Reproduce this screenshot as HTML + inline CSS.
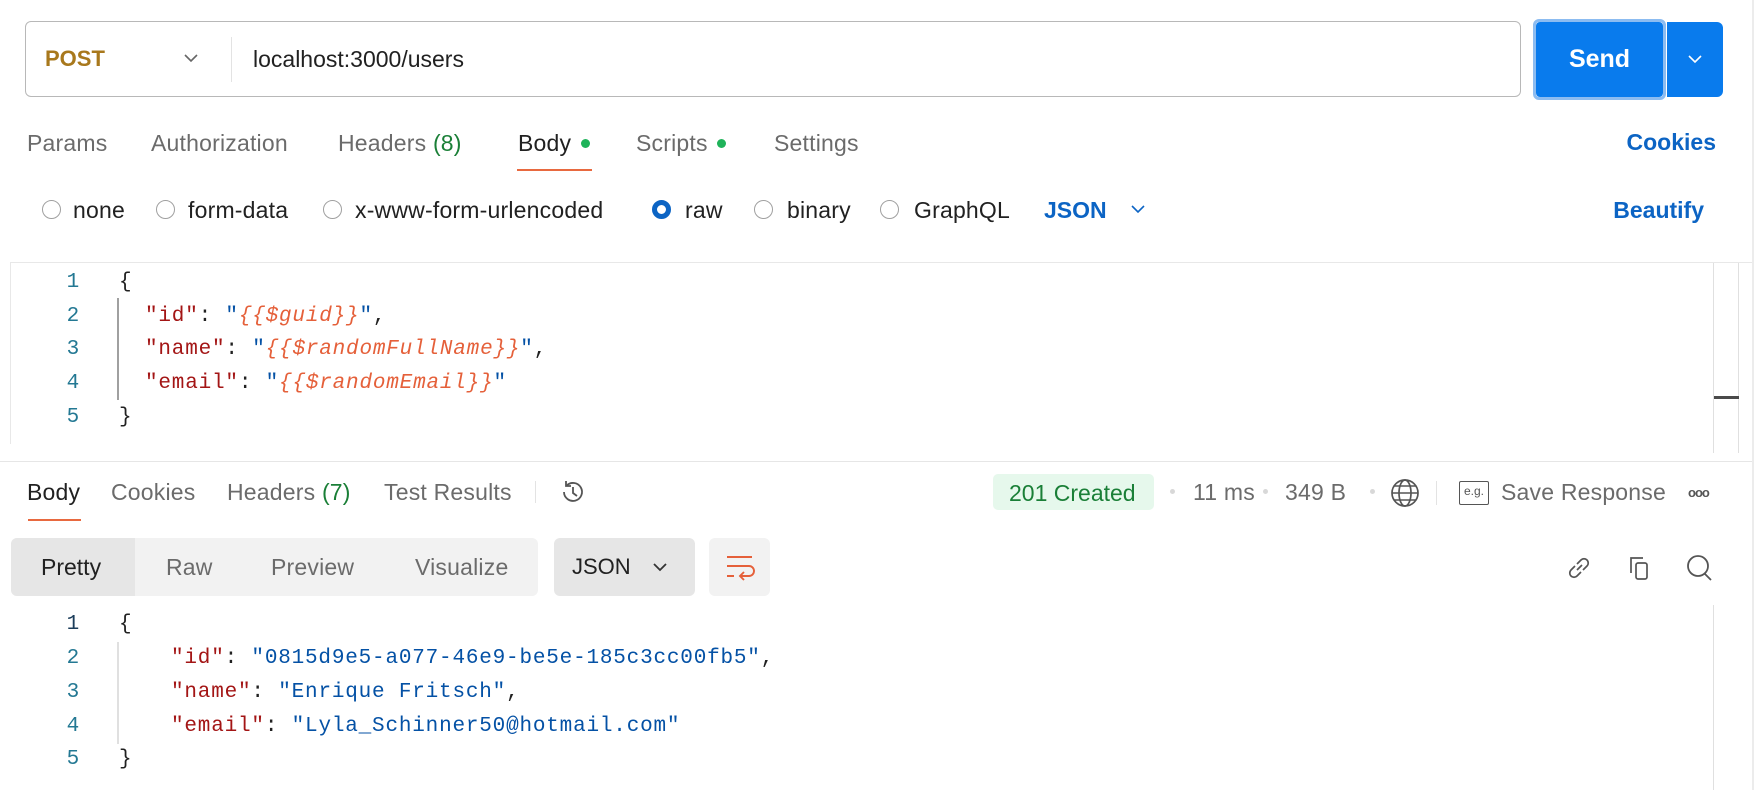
<!DOCTYPE html>
<html><head><meta charset="utf-8"><style>
*{margin:0;padding:0;box-sizing:border-box}
body{width:1754px;height:790px;background:#fff;position:relative;overflow:hidden;font-family:"Liberation Sans",sans-serif;color:#212121}
.a{position:absolute;white-space:nowrap}
.t{font-size:23px;color:#6b6b6b;line-height:26px;letter-spacing:.2px}
.code{font-family:"Liberation Mono",monospace;font-size:21px;letter-spacing:.8px;line-height:24px}
.ln{color:#237893;width:30px;text-align:right}
.k{color:#a31515}.v{color:#0451a5}.var{color:#e5603a;font-style:italic}
.radio{width:19px;height:19px;border:1.5px solid #a0a0a0;border-radius:50%;position:absolute;top:200px}
.dot{width:5px;height:5px;border-radius:50%;background:#d8d8d8;position:absolute;top:489px}
</style></head><body>
<div class="a" style="left:25px;top:21px;width:1496px;height:76px;border:1.5px solid #b8b8b8;border-radius:6px"></div>
<div class="a" style="left:45px;top:46px;font-size:22px;font-weight:bold;color:#a8781c">POST</div>
<svg class="a" style="left:183px;top:52px" width="16" height="12"><path d="M2 3l6 6 6-6" stroke="#666" stroke-width="1.6" fill="none"/></svg>
<div class="a" style="left:231px;top:37px;width:1px;height:45px;background:#e3e3e3"></div>
<div class="a" style="left:253px;top:46px;font-size:23px;color:#212121">localhost:3000/users</div>
<div class="a" style="left:1533px;top:19px;width:133px;height:81px;border:3px solid #8cbcf1;border-radius:6px"></div>
<div class="a" style="left:1536px;top:22px;width:127px;height:75px;background:#097bed;border-radius:4px;color:#fff;font-weight:bold;font-size:25px;text-align:center;line-height:75px">Send</div>
<div class="a" style="left:1667px;top:22px;width:56px;height:75px;background:#097bed;border-radius:0 6px 6px 0"></div>
<svg class="a" style="left:1687px;top:53px" width="16" height="12"><path d="M2 3l6 6 6-6" stroke="#fff" stroke-width="1.6" fill="none"/></svg>
<div class="a t" style="left:27px;top:130px">Params</div>
<div class="a t" style="left:151px;top:130px">Authorization</div>
<div class="a t" style="left:338px;top:130px">Headers <span style="color:#1a7f37">(8)</span></div>
<div class="a t" style="left:518px;top:130px;color:#212121">Body</div>
<div class="a" style="left:581px;top:139px;width:9px;height:9px;border-radius:50%;background:#1fb35a"></div>
<div class="a t" style="left:636px;top:130px">Scripts</div>
<div class="a" style="left:717px;top:139px;width:9px;height:9px;border-radius:50%;background:#1fb35a"></div>
<div class="a t" style="left:774px;top:130px">Settings</div>
<div class="a" style="left:517px;top:169px;width:75px;height:2px;background:#e8693f"></div>
<div class="a" style="right:38px;top:129px;font-size:23px;font-weight:bold;color:#0c64c4">Cookies</div>
<div class="radio" style="left:42px"></div><div class="a t" style="left:73px;top:197px;color:#212121">none</div>
<div class="radio" style="left:156px"></div><div class="a t" style="left:188px;top:197px;color:#212121">form-data</div>
<div class="radio" style="left:323px"></div><div class="a t" style="left:355px;top:197px;color:#212121">x-www-form-urlencoded</div>
<div class="radio" style="left:652px;border:5px solid #0c64c4"></div><div class="a t" style="left:685px;top:197px;color:#212121">raw</div>
<div class="radio" style="left:754px"></div><div class="a t" style="left:787px;top:197px;color:#212121">binary</div>
<div class="radio" style="left:880px"></div><div class="a t" style="left:914px;top:197px;color:#212121">GraphQL</div>
<div class="a" style="left:1044px;top:197px;font-size:23px;font-weight:bold;color:#0c64c4">JSON</div>
<svg class="a" style="left:1130px;top:203px" width="16" height="12"><path d="M2 3l6 6 6-6" stroke="#0c64c4" stroke-width="1.6" fill="none"/></svg>
<div class="a" style="right:50px;top:197px;font-size:23px;font-weight:bold;color:#0c64c4">Beautify</div>
<div class="a" style="left:10px;top:262px;width:1742px;height:1px;background:#e8e8e8"></div>
<div class="a" style="left:10px;top:262px;width:1px;height:182px;background:#e8e8e8"></div>
<div class="a" style="left:1713px;top:263px;width:1px;height:190px;background:#e0e0e0"></div>
<div class="a" style="left:1738px;top:263px;width:1px;height:190px;background:#e0e0e0"></div>
<div class="a" style="left:1714px;top:396px;width:25px;height:3px;background:#4a4a4a"></div>
<div class="a" style="left:117px;top:298px;width:2px;height:102px;background:#a0a0a0"></div>
<div class="a code ln" style="left:50px;top:271px">1</div>
<div class="a code ln" style="left:50px;top:305px">2</div>
<div class="a code ln" style="left:50px;top:338px">3</div>
<div class="a code ln" style="left:50px;top:372px">4</div>
<div class="a code ln" style="left:50px;top:406px">5</div>
<div class="a code" style="left:119px;top:271px">{</div>
<div class="a code" style="left:145px;top:305px"><span class="k">"id"</span>: <span class="v">"</span><span class="var">{{$guid}}</span><span class="v">"</span>,</div>
<div class="a code" style="left:145px;top:338px"><span class="k">"name"</span>: <span class="v">"</span><span class="var">{{$randomFullName}}</span><span class="v">"</span>,</div>
<div class="a code" style="left:145px;top:372px"><span class="k">"email"</span>: <span class="v">"</span><span class="var">{{$randomEmail}}</span><span class="v">"</span></div>
<div class="a code" style="left:119px;top:406px">}</div>
<div class="a" style="left:0;top:461px;width:1754px;height:1px;background:#e6e6e6"></div>
<div class="a" style="left:1752px;top:0;width:2px;height:790px;background:#ececec"></div>
<div class="a t" style="left:27px;top:479px;color:#212121">Body</div>
<div class="a t" style="left:111px;top:479px">Cookies</div>
<div class="a t" style="left:227px;top:479px">Headers <span style="color:#1a7f37">(7)</span></div>
<div class="a t" style="left:384px;top:479px">Test Results</div>
<div class="a" style="left:535px;top:481px;width:1px;height:22px;background:#e3e3e3"></div>
<svg class="a" style="left:558px;top:477px" width="30" height="30" viewBox="0 0 30 30"><path d="M6 15a9 9 0 1 0 2.6-6.4" stroke="#555" stroke-width="1.8" fill="none"/><path d="M8 4v5h5" stroke="#555" stroke-width="1.8" fill="none"/><path d="M15 10v6l4 3" stroke="#555" stroke-width="1.8" fill="none"/></svg>
<div class="a" style="left:28px;top:519px;width:53px;height:2px;background:#e8693f"></div>
<div class="a" style="left:993px;top:474px;width:161px;height:36px;background:#e6f8ec;border-radius:5px"></div>
<div class="a" style="left:1009px;top:480px;font-size:23px;color:#1a7f37">201 Created</div>
<div class="dot" style="left:1170px"></div>
<div class="a t" style="left:1193px;top:479px">11 ms</div>
<div class="dot" style="left:1263px"></div>
<div class="a t" style="left:1285px;top:479px">349 B</div>
<div class="dot" style="left:1370px"></div>
<svg class="a" style="left:1389px;top:477px" width="32" height="32" viewBox="0 0 32 32"><circle cx="16" cy="16" r="13" stroke="#555" stroke-width="1.7" fill="none"/><ellipse cx="16" cy="16" rx="6" ry="13" stroke="#555" stroke-width="1.7" fill="none"/><path d="M3 16h26M5 9h22M5 23h22" stroke="#555" stroke-width="1.5"/></svg>
<div class="a" style="left:1436px;top:481px;width:1px;height:24px;background:#e3e3e3"></div>
<div class="a" style="left:1459px;top:481px;width:30px;height:24px;border:1.6px solid #555;border-radius:2px;font-size:12px;color:#555;text-align:center;line-height:18px">e.g.</div>
<div class="a t" style="left:1501px;top:479px">Save Response</div>
<div class="a" style="left:1688px;top:485px;font-size:13px;color:#555;letter-spacing:-1px;font-weight:bold">ooo</div>
<div class="a" style="left:11px;top:538px;width:527px;height:58px;background:#f2f2f2;border-radius:6px"></div>
<div class="a" style="left:11px;top:538px;width:124px;height:58px;background:#e6e6e6;border-radius:6px 0 0 6px"></div>
<div class="a" style="left:41px;top:554px;font-size:23px;color:#212121">Pretty</div>
<div class="a t" style="left:166px;top:554px">Raw</div>
<div class="a t" style="left:271px;top:554px">Preview</div>
<div class="a t" style="left:415px;top:554px">Visualize</div>
<div class="a" style="left:554px;top:538px;width:141px;height:58px;background:#e6e6e6;border-radius:6px"></div>
<div class="a" style="left:572px;top:554px;font-size:22px;color:#212121">JSON</div>
<svg class="a" style="left:652px;top:561px" width="16" height="12"><path d="M2 3l6 6 6-6" stroke="#333" stroke-width="1.8" fill="none"/></svg>
<div class="a" style="left:709px;top:538px;width:61px;height:58px;background:#f2f2f2;border-radius:6px"></div>
<svg class="a" style="left:724px;top:553px" width="32" height="30" viewBox="0 0 32 30"><path d="M3 4h25M3 13h22a5 5 0 0 1 0 10h-8M3 23h7" stroke="#e5603a" stroke-width="1.9" fill="none"/><path d="M20 19l-4 4 4 4" stroke="#e5603a" stroke-width="1.9" fill="none"/></svg>
<svg class="a" style="left:1564px;top:553px" width="30" height="30" viewBox="0 0 30 30"><path d="M13 17l5-5M11 13l-4 4a4 4 0 0 0 6 6l4-4M19 17l4-4a4 4 0 0 0-6-6l-4 4" stroke="#555" stroke-width="1.7" fill="none"/></svg>
<svg class="a" style="left:1625px;top:553px" width="30" height="30" viewBox="0 0 30 30"><path d="M6 20V5h12" stroke="#555" stroke-width="1.7" fill="none"/><rect x="11" y="10" width="11" height="16" rx="2" stroke="#555" stroke-width="1.7" fill="none"/></svg>
<svg class="a" style="left:1685px;top:553px" width="30" height="30" viewBox="0 0 30 30"><circle cx="13" cy="13" r="10" stroke="#555" stroke-width="1.8" fill="none"/><path d="M20 21l6 6" stroke="#555" stroke-width="1.8"/></svg>
<div class="a" style="left:1713px;top:605px;width:1px;height:185px;background:#e0e0e0"></div>
<div class="a" style="left:117px;top:642px;width:2px;height:102px;background:#e0e0e0"></div>
<div class="a code ln" style="left:50px;top:613px;color:#1c3d5a">1</div>
<div class="a code ln" style="left:50px;top:647px">2</div>
<div class="a code ln" style="left:50px;top:681px">3</div>
<div class="a code ln" style="left:50px;top:715px">4</div>
<div class="a code ln" style="left:50px;top:748px">5</div>
<div class="a code" style="left:119px;top:613px">{</div>
<div class="a code" style="left:171px;top:647px"><span class="k">"id"</span>: <span class="v">"0815d9e5-a077-46e9-be5e-185c3cc00fb5"</span>,</div>
<div class="a code" style="left:171px;top:681px"><span class="k">"name"</span>: <span class="v">"Enrique Fritsch"</span>,</div>
<div class="a code" style="left:171px;top:715px"><span class="k">"email"</span>: <span class="v">"Lyla_Schinner50@hotmail.com"</span></div>
<div class="a code" style="left:119px;top:748px">}</div>
</body></html>
